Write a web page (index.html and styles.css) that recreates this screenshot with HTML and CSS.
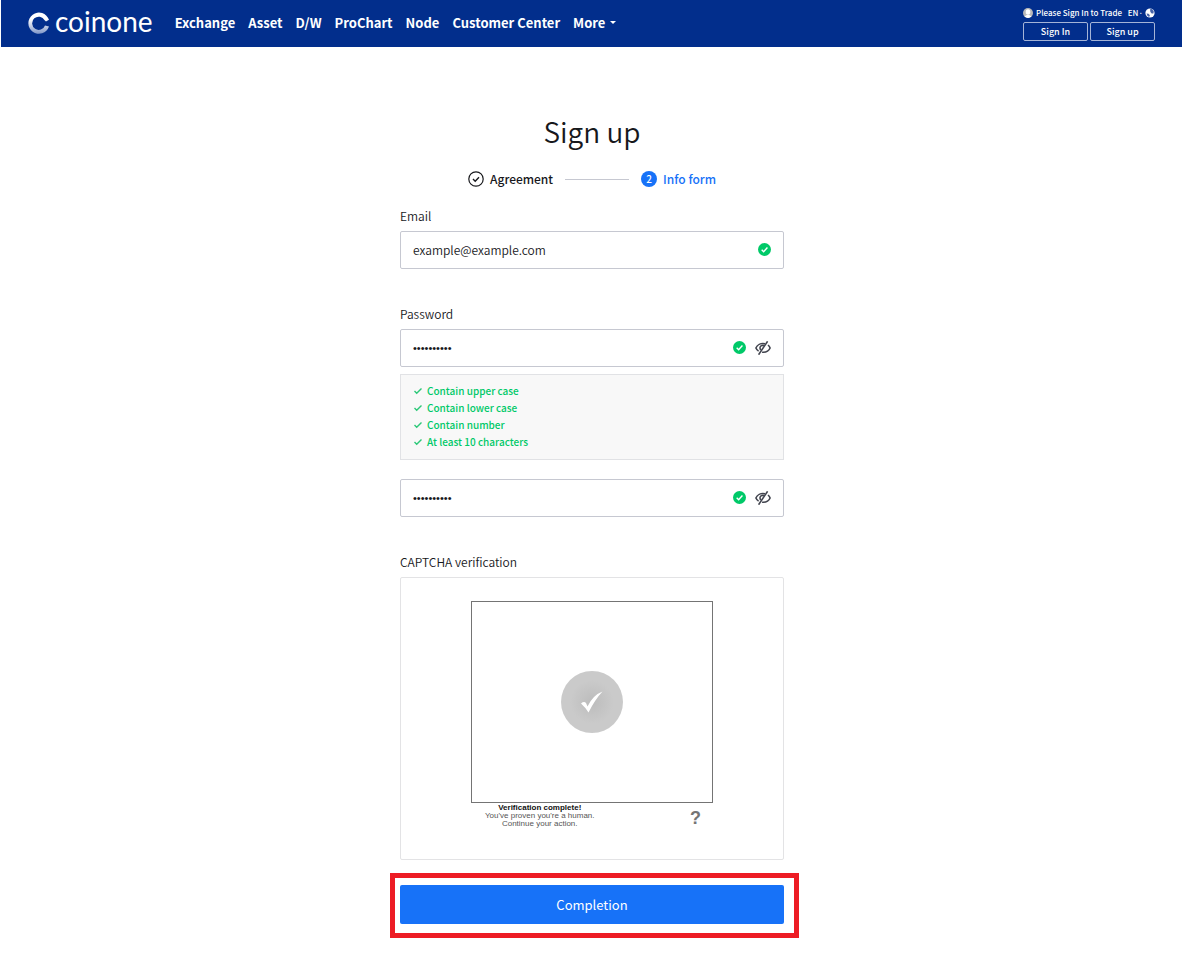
FILE: index.html
```html
<!DOCTYPE html>
<html lang="en">
<head>
  <meta charset="UTF-8" />
  <meta name="viewport" content="width=device-width, initial-scale=1.0" />
  <title>Coinone - Sign up</title>
  <link rel="stylesheet" href="styles.css">
</head>
<body>

  <!-- Shared icons -->
  <svg class="sprite" aria-hidden="true">
    <symbol id="icon-valid" viewBox="0 0 12 12">
      <circle cx="6" cy="6" r="6" fill="#00c968" />
      <path d="M3.4 6.2l1.8 1.8 3.5-3.8" fill="none" stroke="#fff" stroke-width="1.3" />
    </symbol>
    <symbol id="icon-check" viewBox="0 0 8 8">
      <path d="M.5 4l2.2 2.2L7.5 1.4" fill="none" stroke="#2cc878" stroke-width="1.4" />
    </symbol>
    <symbol id="icon-eye-off" viewBox="0 0 16 14">
      <g fill="none" stroke="#42454f" stroke-width="1.6">
        <path d="M10 2.800C5.600 1.800 2.200 4 .9 7c.6 1.400 1.500 2.400 2.700 3.100" />
        <path d="M13 4C14 4.800 14.700 5.800 15.100 7c-1.400 3.200-4.400 4.600-8 4.200" />
        <path d="M9 4.500C6.600 3.900 4.900 5.200 5 7c0 .8.300 1.400.700 1.900" />
        <path d="M3.600 13.700L12.600.3" />
      </g>
    </symbol>
  </svg>

  <header class="header">
    <a class="logo" href="#">
      <svg class="logo-mark" viewBox="0 0 22 22" aria-hidden="true">
        <defs>
          <linearGradient id="logoFade" x1="0" y1="0" x2="0" y2="1">
            <stop offset="0.3" stop-color="#fff" />
            <stop offset="1" stop-color="#7f96c8" />
          </linearGradient>
        </defs>
        <path d="M21 7.800A10.600 10.600 0 1 0 21 14.600L17 13.400A6.600 6.600 0 1 1 16.600 8.200L18 9.500Z" fill="url(#logoFade)" />
      </svg>
      <span>coinone</span>
    </a>
    <nav class="nav">
      <a href="#">Exchange</a>
      <a href="#">Asset</a>
      <a href="#">D/W</a>
      <a href="#">ProChart</a>
      <a href="#">Node</a>
      <a href="#">Customer Center</a>
      <a class="more" href="#">More</a>
    </nav>
    <div class="account">
      <div class="account-info">
        <svg class="avatar" viewBox="0 0 10 10" aria-hidden="true">
          <circle cx="5" cy="5" r="5" fill="#b9b9b9" />
          <ellipse cx="5" cy="4" rx="2.300" ry="2.700" fill="#fff" />
          <path d="M1.500 8.500Q5 5 8.500 8.500A5 5 0 0 1 1.500 8.500Z" fill="#fff" />
        </svg>
        <span>Please Sign In to Trade</span>
        <a class="lang" href="#">EN·
          <svg class="globe" viewBox="0 0 10 10" aria-hidden="true">
            <circle cx="5" cy="5" r="4.600" fill="#fff" />
            <path d="M5 1.200L7 1l1.800 2.400-.4 2.200-1.700-.2L5.400 4zM1.500 5.600l2 .2 1.400 1.500-.7 1.700L2.500 8z" fill="#4763a8" />
          </svg>
        </a>
      </div>
      <div class="account-buttons">
        <button type="button">Sign In</button>
        <button type="button">Sign up</button>
      </div>
    </div>
  </header>

  <main class="signup">
    <h1>Sign up</h1>

    <ol class="steps">
      <li class="step">
        <svg class="step-icon" viewBox="0 0 16 16" aria-hidden="true">
          <circle cx="8" cy="8" r="7.200" fill="none" stroke="#17181c" stroke-width="1.200" />
          <path d="M5 8l2.200 2.200L11 6.200" fill="none" stroke="#17181c" stroke-width="1.400" />
        </svg>
        Agreement
      </li>
      <li class="step active"><span class="step-number">2</span>Info form</li>
    </ol>

    <form>
      <label for="email">Email</label>
      <div class="field">
        <input type="email" id="email" value="example@example.com" />
        <svg class="valid"><use href="#icon-valid" /></svg>
      </div>

      <label for="password">Password</label>
      <div class="field password">
        <input type="password" id="password" value="Abcdefgh12" />
        <svg class="valid"><use href="#icon-valid" /></svg>
        <button type="button" class="toggle" aria-label="Show password">
          <svg><use href="#icon-eye-off" /></svg>
        </button>
      </div>

      <ul class="rules">
        <li><svg><use href="#icon-check" /></svg>Contain upper case</li>
        <li><svg><use href="#icon-check" /></svg>Contain lower case</li>
        <li><svg><use href="#icon-check" /></svg>Contain number</li>
        <li><svg><use href="#icon-check" /></svg>At least 10 characters</li>
      </ul>

      <div class="field">
        <input type="password" id="confirmPassword" value="Abcdefgh12" aria-label="Confirm password" />
        <svg class="valid"><use href="#icon-valid" /></svg>
        <button type="button" class="toggle" aria-label="Show password">
          <svg><use href="#icon-eye-off" /></svg>
        </button>
      </div>

      <h2>CAPTCHA verification</h2>
      <div class="captcha">
        <div class="captcha-box">
          <svg class="captcha-done" viewBox="0 0 62 62" aria-hidden="true">
            <defs>
              <radialGradient id="doneShade">
                <stop offset="0" stop-color="#bcbcbc" />
                <stop offset="0.700" stop-color="#cacaca" />
              </radialGradient>
            </defs>
            <circle cx="31" cy="31" r="31" fill="url(#doneShade)" />
            <path d="M20 32.500Q23 30 25 32l1.500 3.500Q32 24 41.500 20.500 34 28.500 27.500 41.500Q24 36 20 32.500Z" fill="#fff" />
          </svg>
        </div>
        <div class="captcha-footer">
          <p><strong>Verification complete!</strong><br />You've proven you're a human.<br />Continue your action.</p>
          <a class="help" href="#">?</a>
        </div>
      </div>

      <!-- Highlighted final action -->
      <div class="highlight">
        <button type="submit">Completion</button>
      </div>
    </form>
  </main>

</body>
</html>
```
FILE: styles.css
```css
* {
  box-sizing: border-box;
}

body {
  margin: 0;
  background: #fff;
  color: #17181c;
  font-family: "Noto Sans CJK KR", "Noto Sans", sans-serif;
  font-size: 12px;
  line-height: 18px;
}

button,
input {
  font-family: inherit;
}

a {
  color: inherit;
  text-decoration: none;
}

.sprite {
  display: none;
}

/* Header */
.header {
  display: flex;
  align-items: center;
  height: 47px;
  padding: 0 27px 2px;
  border-left: 1px solid #fff;
  background: #022e8c;
  color: #fff;
}

.logo {
  display: flex;
  align-items: center;
  gap: 5px;
  font-family: Lato, sans-serif;
  font-size: 28px;
  line-height: 42px;
}

.logo span {
  padding-bottom: 4px;
}

.logo-mark {
  width: 22px;
  height: 22px;
}

.nav {
  display: flex;
  gap: 13px;
  margin-left: 22px;
  font-size: 13px;
  font-weight: 700;
}

.more::after {
  content: "";
  display: inline-block;
  margin-left: 5px;
  border: 3px solid transparent;
  border-top-color: #fff;
  border-bottom: 0;
  vertical-align: 4px;
}

.account {
  margin-left: auto;
  font-size: 9px;
  font-weight: 500;
}

.account-info {
  display: flex;
  align-items: center;
  height: 18px;
  font-size: 8px;
}

.avatar {
  width: 10px;
  height: 10px;
  margin-right: 3px;
}

.lang {
  display: flex;
  align-items: center;
  gap: 2px;
  margin-left: auto;
}

.globe {
  width: 10px;
  height: 10px;
}

.account-buttons {
  display: flex;
  gap: 2px;
}

.account-buttons button {
  width: 65px;
  height: 19px;
  padding: 0;
  border: 1px solid #a5b4d7;
  border-radius: 2px;
  background: none;
  color: #fff;
  font-size: 9px;
  font-weight: 500;
  line-height: 16px;
}

/* Sign up form */
.signup {
  width: 100%;
  max-width: 386px;
  margin: 0 auto;
  padding: 62px 0 0 2px;
}

h1 {
  margin: 0;
  font-size: 28px;
  font-weight: 350;
  line-height: 44px;
  text-align: center;
}

.steps {
  display: flex;
  justify-content: center;
  margin: 17px 0 19px;
  padding: 0;
  list-style: none;
}

.step {
  display: flex;
  align-items: center;
  gap: 6px;
  font-weight: 500;
}

.step.active {
  color: #1772f8;
}

.step.active::before {
  content: "";
  width: 64px;
  height: 1px;
  margin: 0 6px 0 12px;
  background: #c6c8d1;
}

.step-icon,
.step-number {
  width: 16px;
  height: 16px;
}

.step-number {
  border-radius: 50%;
  background: #1772f8;
  color: #fff;
  font-size: 10px;
  line-height: 16px;
  text-align: center;
}

label,
h2 {
  display: block;
  margin: 0 0 6px;
  font-size: 12px;
  font-weight: 350;
  line-height: 18px;
}

.field {
  display: flex;
  align-items: center;
  height: 38px;
  margin-bottom: 36px;
  padding: 0 12px 2px;
  border: 1px solid #c6c8d1;
  border-radius: 2px;
}

.field.password {
  margin-bottom: 7px;
}

.field input {
  flex: 1;
  min-width: 0;
  padding: 0;
  border: 0;
  outline: 0;
  background: none;
  color: #17181c;
  font-size: 12px;
  font-weight: 350;
}

.field input[type="password"] {
  padding-top: 2px;
  font-family: "Liberation Sans", sans-serif;
  font-size: 11px;
}

.valid {
  width: 13px;
  height: 13px;
}

.toggle {
  margin-left: 9px;
  padding: 2px 0 0;
  border: 0;
  background: none;
  cursor: pointer;
}

.toggle svg {
  display: block;
  width: 16px;
  height: 14px;
}

.rules {
  margin: 0 0 19px;
  padding: 7px 13px 9px;
  border: 1px solid #e1e2e5;
  background: #f8f8f8;
  color: #00c968;
  font-size: 10px;
  font-weight: 500;
  line-height: 17px;
  list-style: none;
}

.rules li {
  display: flex;
  align-items: center;
  gap: 5px;
}

.rules svg {
  width: 8px;
  height: 8px;
}

/* Captcha */
.captcha {
  height: 283px;
  padding: 23px 70px;
  border: 1px solid #e3e3e5;
  border-radius: 2px;
}

.captcha-box {
  display: flex;
  align-items: center;
  justify-content: center;
  height: 202px;
  border: 1px solid #747474;
}

.captcha-done {
  width: 62px;
  height: 62px;
}

.captcha-footer {
  display: flex;
  align-items: flex-start;
  justify-content: space-between;
  padding: 1px 12px 0 14px;
  color: #555;
  font-family: "Liberation Sans", Arial, sans-serif;
  font-size: 8px;
  line-height: 8px;
  text-align: center;
}

.captcha-footer p {
  margin: 0;
}

.captcha-footer strong {
  color: #111;
}

.help {
  color: #757575;
  font-size: 18px;
  font-weight: 700;
  line-height: 28px;
}

.highlight {
  margin: 13px -15px 0 -10px;
  padding: 7px 10px 9px 5px;
  border: 5px solid #ed1c24;
}

.highlight button {
  display: block;
  width: 100%;
  height: 39px;
  border: 0;
  border-radius: 2px;
  background: #1772f8;
  color: #fff;
  font-size: 13px;
  cursor: pointer;
}
```
